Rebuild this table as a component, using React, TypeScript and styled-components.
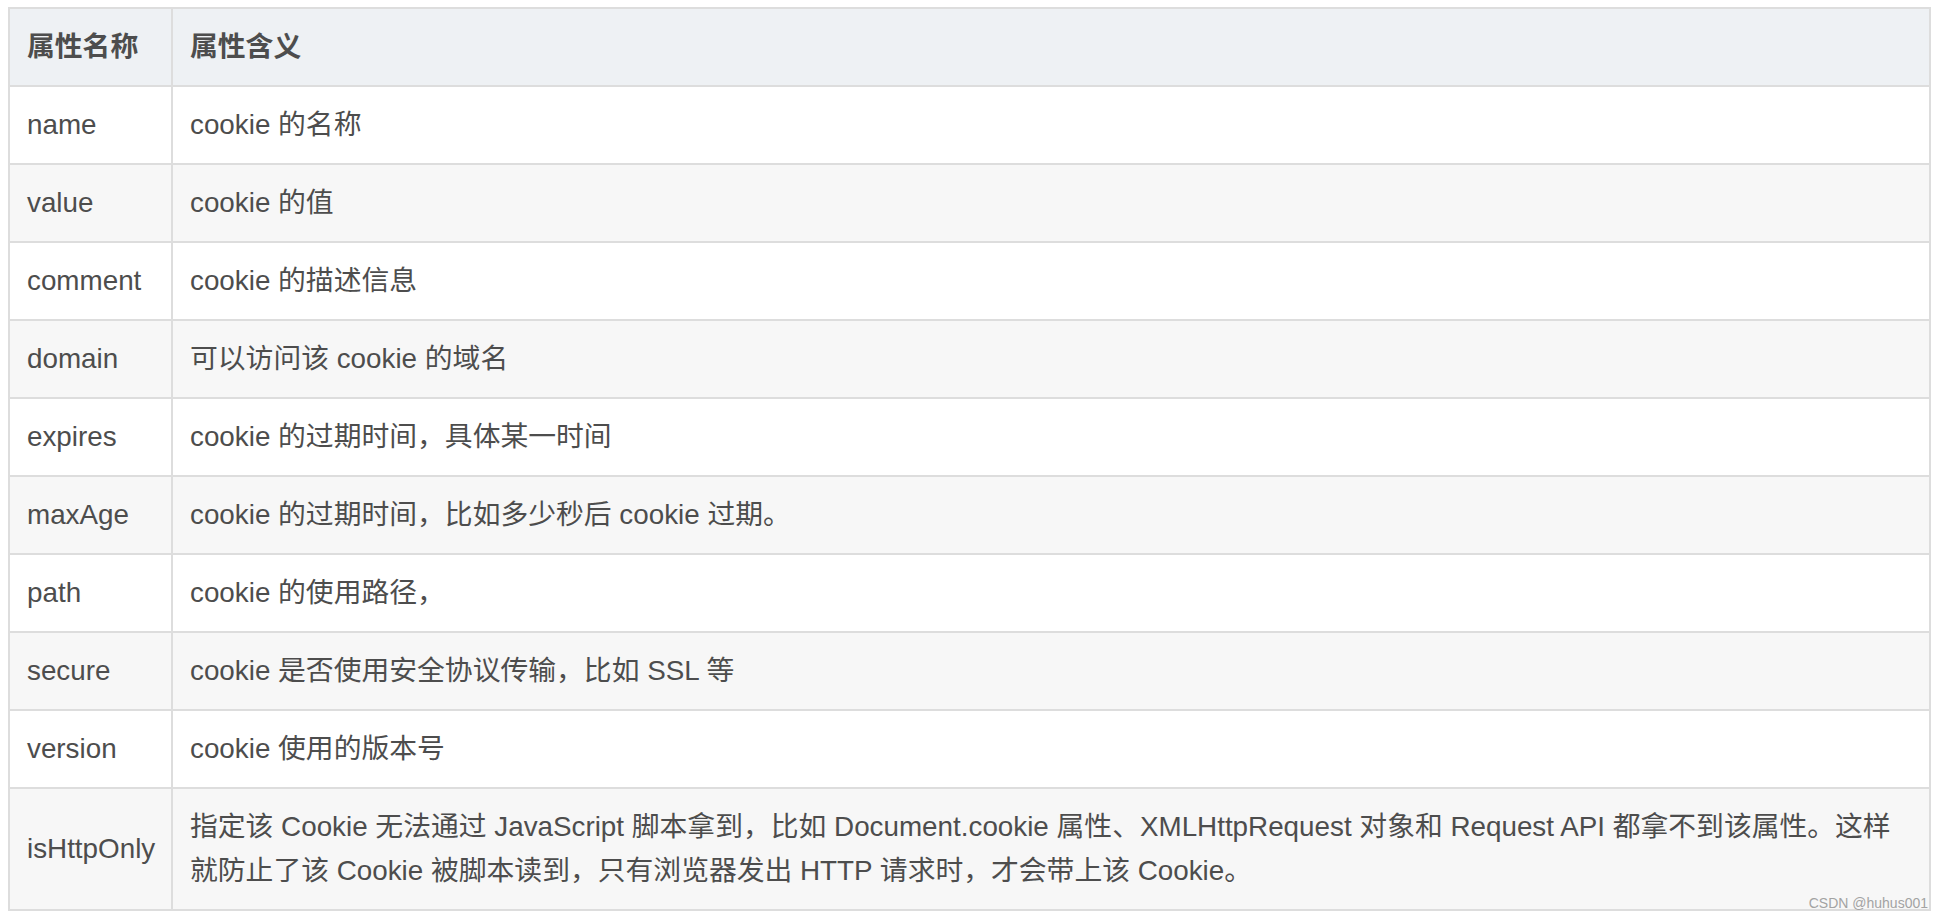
import React from 'react'
import styled, { createGlobalStyle } from 'styled-components'

interface Attr {
    name: string
    desc: React.ReactNode
}

const attrs: Attr[] = [
    { name: 'name', desc: 'cookie 的名称' },
    { name: 'value', desc: 'cookie 的值' },
    { name: 'comment', desc: 'cookie 的描述信息' },
    { name: 'domain', desc: '可以访问该 cookie 的域名' },
    { name: 'expires', desc: 'cookie 的过期时间，具体某一时间' },
    { name: 'maxAge', desc: 'cookie 的过期时间，比如多少秒后 cookie 过期。' },
    { name: 'path', desc: 'cookie 的使用路径，' },
    { name: 'secure', desc: 'cookie 是否使用安全协议传输，比如 SSL 等' },
    { name: 'version', desc: 'cookie 使用的版本号' },
    {
        name: 'isHttpOnly',
        desc: (
            <>
                指定该 Cookie 无法通过 JavaScript 脚本拿到，比如 Document.cookie 属性、XMLHttpRequest 对象和 Request API 都拿不到该属性。这样
                <br />
                就防止了该 Cookie 被脚本读到，只有浏览器发出 HTTP 请求时，才会带上该 Cookie。
            </>
        ),
    },
]

const App: React.FC = () => {
    return (
        <Page>
            <GlobalStyle />
            <Table>
                <thead>
                    <tr>
                        <HeadCell>属性名称</HeadCell>
                        <HeadCell>属性含义</HeadCell>
                    </tr>
                </thead>
                <tbody>
                    {attrs.map((attr, index) => (
                        <Row key={attr.name} striped={index % 2 === 1}>
                            <NameCell>{attr.name}</NameCell>
                            <Cell>{attr.desc}</Cell>
                        </Row>
                    ))}
                </tbody>
            </Table>
            <Watermark>CSDN @huhus001</Watermark>
        </Page>
    )
}

const GlobalStyle = createGlobalStyle`
    html, body {
        margin: 0;
        background: #ffffff;
    }
    body {
        font-family: "Liberation Sans", "Noto Sans CJK SC", sans-serif;
        color: #4d4d4d;
    }
`

const Page = styled.div`
    position: relative;
    padding: 7px 0 0 8px;
    width: 1923px;
`

const Table = styled.table`
    width: 100%;
    border-collapse: collapse;
    table-layout: fixed;
    border: 2px solid #dddddd;
    font-size: 27.8px;
    line-height: 44px;
`

const HeadCell = styled.th`
    background: #eef1f4;
    border: 2px solid #dddddd;
    padding: 16px 17px;
    text-align: left;
    font-weight: bold;
    color: #4d4d4d;

    &:first-child {
        width: 127px;
    }
`

const Row = styled.tr<{ striped: boolean }>`
    background: ${props => (props.striped ? '#f7f7f7' : '#ffffff')};
`

const Cell = styled.td`
    border: 2px solid #dddddd;
    padding: 16px 17px;
    vertical-align: middle;
    white-space: nowrap;
`

const NameCell = styled(Cell)`
    padding-right: 10px;
`

const Watermark = styled.div`
    position: absolute;
    right: 3px;
    bottom: 0;
    font-family: "Liberation Sans", sans-serif;
    font-size: 14px;
    line-height: 16px;
    color: #a3a3a3;
`

export default App
